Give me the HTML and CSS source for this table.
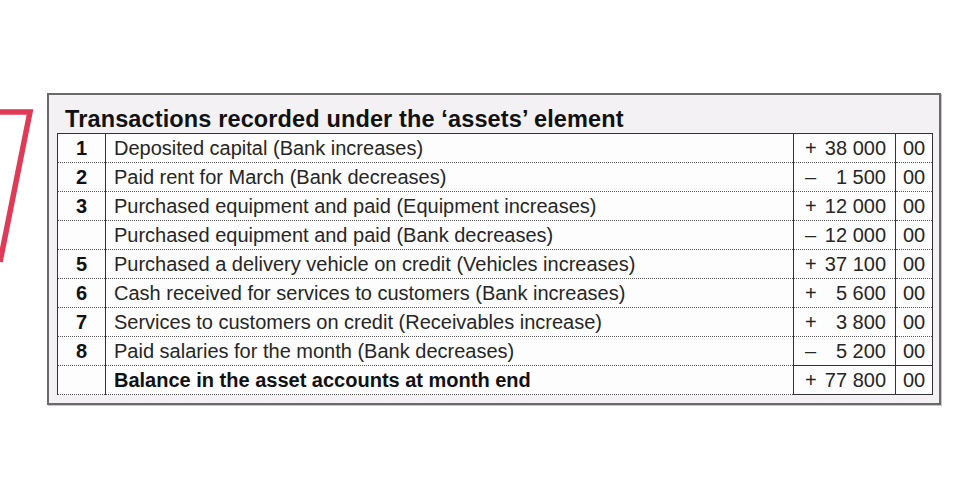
FILE: index.html
```html
<!DOCTYPE html>
<html lang="en">
<head>
<meta charset="utf-8">
<title>Transactions recorded under the assets element</title>
<link rel="stylesheet" href="styles.css">
</head>
<body>
<svg class="marker" width="40" height="270" viewBox="0 0 40 270" aria-hidden="true">
  <polyline points="-5,112 30,112 0,262" fill="none" stroke="#e03a56" stroke-width="5.5" stroke-linejoin="miter"/>
</svg>
<div class="page">
  <div class="panel">
    <div class="title">Transactions recorded under the ‘assets’ element</div>
    <table class="ledger">
      <colgroup>
        <col class="c-num"><col class="c-desc"><col class="c-amt"><col class="c-cents">
      </colgroup>
      <tbody>
        <tr><td class="num">1</td><td class="desc">Deposited capital (Bank increases)</td><td class="amt"><span class="amt-in"><span>+</span><span>38 000</span></span></td><td class="cents">00</td></tr>
        <tr><td class="num">2</td><td class="desc">Paid rent for March (Bank decreases)</td><td class="amt"><span class="amt-in"><span>–</span><span>1 500</span></span></td><td class="cents">00</td></tr>
        <tr><td class="num">3</td><td class="desc">Purchased equipment and paid (Equipment increases)</td><td class="amt"><span class="amt-in"><span>+</span><span>12 000</span></span></td><td class="cents">00</td></tr>
        <tr><td class="num"></td><td class="desc">Purchased equipment and paid (Bank decreases)</td><td class="amt"><span class="amt-in"><span>–</span><span>12 000</span></span></td><td class="cents">00</td></tr>
        <tr><td class="num">5</td><td class="desc">Purchased a delivery vehicle on credit (Vehicles increases)</td><td class="amt"><span class="amt-in"><span>+</span><span>37 100</span></span></td><td class="cents">00</td></tr>
        <tr><td class="num">6</td><td class="desc">Cash received for services to customers (Bank increases)</td><td class="amt"><span class="amt-in"><span>+</span><span>5 600</span></span></td><td class="cents">00</td></tr>
        <tr><td class="num">7</td><td class="desc">Services to customers on credit (Receivables increase)</td><td class="amt"><span class="amt-in"><span>+</span><span>3 800</span></span></td><td class="cents">00</td></tr>
        <tr><td class="num">8</td><td class="desc">Paid salaries for the month (Bank decreases)</td><td class="amt"><span class="amt-in"><span>–</span><span>5 200</span></span></td><td class="cents">00</td></tr>
        <tr class="total"><td class="num"></td><td class="desc strong">Balance in the asset accounts at month end</td><td class="amt"><span class="amt-in"><span>+</span><span>77 800</span></span></td><td class="cents">00</td></tr>
      </tbody>
    </table>
  </div>
</div>
</body>
</html>
```

FILE: styles.css
```css
html, body {
  margin: 0;
  padding: 0;
  background: #ffffff;
}

body {
  font-family: "Liberation Sans", Arial, sans-serif;
  color: #1a1a1a;
  width: 972px;
  height: 493px;
  overflow: hidden;
  position: relative;
}

.marker {
  position: absolute;
  left: 0;
  top: 0;
}

.page {
  padding: 93px 0 0 47px;
}

.panel {
  background: #f3f1f3;
  border: 2px solid #6a6a6a;
  box-shadow: 1px 1px 0 #c8c8c8;
  padding: 0 6px 8px 8px;
  box-sizing: border-box;
  width: 894px;
}

.title {
  font-weight: bold;
  font-size: 23.5px;
  line-height: 28px;
  height: 28px;
  padding: 10px 0 0 8px;
  color: #111;
  letter-spacing: 0.13px;
}

.ledger {
  border-collapse: collapse;
  table-layout: fixed;
  width: 875px;
  background: #fdfdfd;
  font-size: 20px;
}

.c-num { width: 48px; }
.c-desc { width: 688px; }
.c-amt { width: 102px; }
.c-cents { width: 37px; }

.ledger td {
  height: 28px;
  padding: 0;
  line-height: 28px;
  border-bottom: 1px dotted #555;
  white-space: nowrap;
  color: #262626;
}

.ledger tr:first-child td {
  border-top: 1px solid #333;
}

.ledger td.num {
  border-left: 1px solid #333;
  border-right: 1px solid #333;
  text-align: center;
  font-weight: bold;
  color: #111;
}

.ledger td.desc {
  padding-left: 8px;
  border-right: 1px solid #333;
}

.ledger td.desc.strong {
  font-weight: bold;
  color: #111;
}

.ledger td.amt {
  padding: 0 9px 0 11px;
  border-right: 1px solid #333;
}

.amt-in {
  display: flex;
  justify-content: space-between;
}

.ledger td.cents {
  text-align: center;
  border-right: 1px solid #333;
}

.ledger tr.total td.amt,
.ledger tr.total td.cents {
  border-top: 1px solid #333;
  border-bottom: 1px solid #333;
}
```
